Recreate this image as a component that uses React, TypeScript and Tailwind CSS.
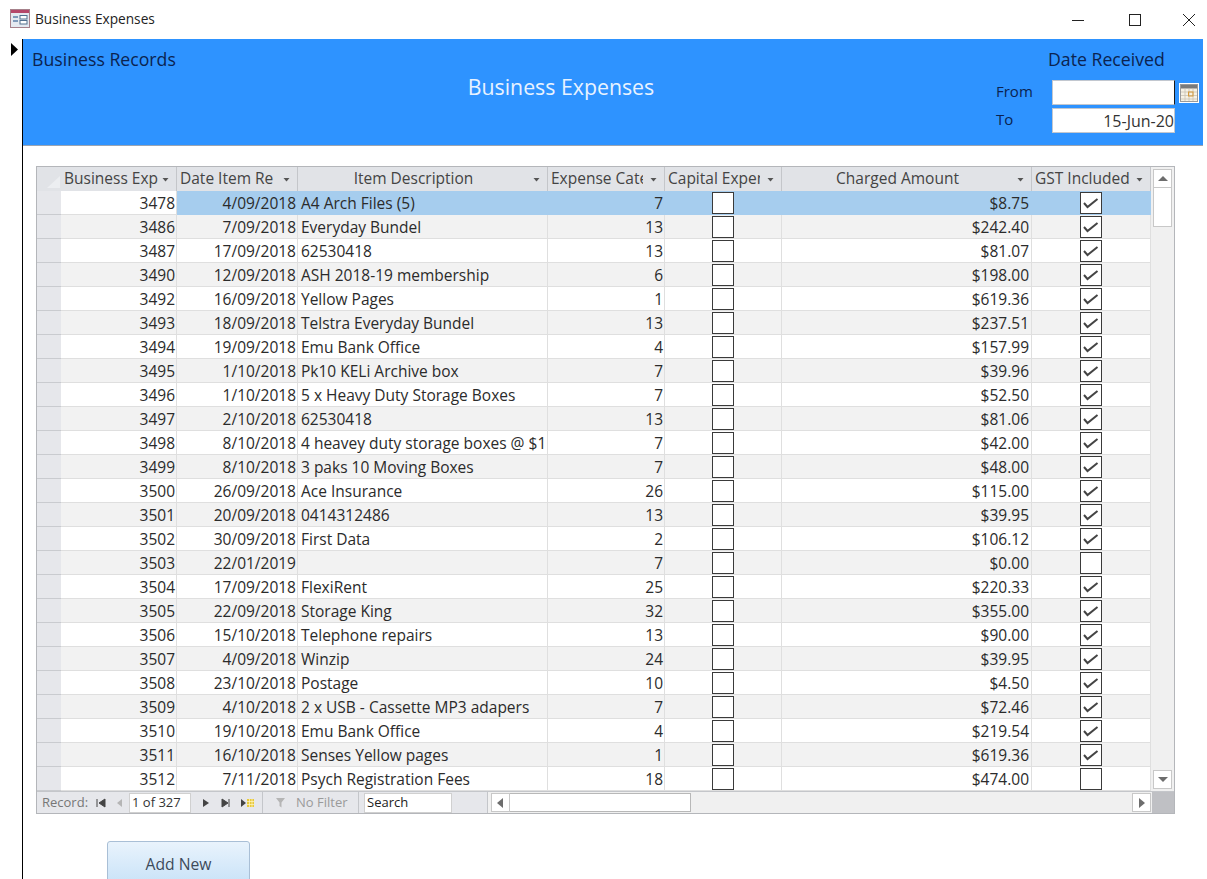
import React from 'react';

const rows: [number, string, string, number, string, boolean][] = [
  [3478, '4/09/2018', 'A4 Arch Files (5)', 7, '$8.75', true],
  [3486, '7/09/2018', 'Everyday Bundel', 13, '$242.40', true],
  [3487, '17/09/2018', '62530418', 13, '$81.07', true],
  [3490, '12/09/2018', 'ASH 2018-19 membership', 6, '$198.00', true],
  [3492, '16/09/2018', 'Yellow Pages', 1, '$619.36', true],
  [3493, '18/09/2018', 'Telstra Everyday Bundel', 13, '$237.51', true],
  [3494, '19/09/2018', 'Emu Bank Office', 4, '$157.99', true],
  [3495, '1/10/2018', 'Pk10 KELi Archive box', 7, '$39.96', true],
  [3496, '1/10/2018', '5 x Heavy Duty Storage Boxes', 7, '$52.50', true],
  [3497, '2/10/2018', '62530418', 13, '$81.06', true],
  [3498, '8/10/2018', '4 heavey duty storage boxes @ $1', 7, '$42.00', true],
  [3499, '8/10/2018', '3 paks 10 Moving Boxes', 7, '$48.00', true],
  [3500, '26/09/2018', 'Ace Insurance', 26, '$115.00', true],
  [3501, '20/09/2018', '0414312486', 13, '$39.95', true],
  [3502, '30/09/2018', 'First Data', 2, '$106.12', true],
  [3503, '22/01/2019', '', 7, '$0.00', false],
  [3504, '17/09/2018', 'FlexiRent', 25, '$220.33', true],
  [3505, '22/09/2018', 'Storage King', 32, '$355.00', true],
  [3506, '15/10/2018', 'Telephone repairs', 13, '$90.00', true],
  [3507, '4/09/2018', 'Winzip', 24, '$39.95', true],
  [3508, '23/10/2018', 'Postage', 10, '$4.50', true],
  [3509, '4/10/2018', '2 x USB - Cassette MP3 adapers', 7, '$72.46', true],
  [3510, '19/10/2018', 'Emu Bank Office', 4, '$219.54', true],
  [3511, '16/10/2018', 'Senses Yellow pages', 1, '$619.36', true],
  [3512, '7/11/2018', 'Psych Registration Fees', 18, '$474.00', false],
];

function Caret() {
  return (
    <svg width="7" height="5" viewBox="0 0 7 5" className="shrink-0">
      <path d="M0.5 1h6L3.5 4.5z" fill="#555" />
    </svg>
  );
}

function HeaderCell({ label, className, center, clip }: { label: string; className: string; center?: boolean; clip?: boolean }) {
  return (
    <div className={`flex h-full shrink-0 items-center border-r border-[#c4c6ca] pl-[3px] pr-[7px] ${className}`}>
      <span className={`flex-1 overflow-hidden whitespace-nowrap ${center ? 'pr-[3px] text-center' : ''}`}>{label}</span>
      <span className={clip ? 'ml-[7px]' : 'ml-[4px]'}><Caret /></span>
    </div>
  );
}

function CheckBox({ checked }: { checked: boolean }) {
  return (
    <div className="flex h-[22px] w-[22px] items-center justify-center border border-[#3a3a3a] bg-white">
      {checked && (
        <svg width="20" height="20" viewBox="0 0 20 20">
          <path d="M3 10l3.5 4L16.5 6" fill="none" stroke="#444" strokeWidth="2" />
        </svg>
      )}
    </div>
  );
}

function Row({ row, index }: { row: (typeof rows)[number]; index: number }) {
  const selected = index === 0;
  const bg = selected ? 'bg-[#a6cdee]' : index % 2 === 0 ? 'bg-white' : 'bg-[#f2f2f2]';
  const line = selected ? 'border-[#a6cdee]' : 'border-[#dfdfdf]';
  return (
    <div className={`flex h-[24px] text-[#2b2b2b] ${bg}`}>
      <div className="w-[24px] shrink-0 border-b border-[#c9cbcf] bg-[#e6e7eb]" />
      <div className={`w-[116px] shrink-0 border-r border-b border-[#dfdfdf] pr-[1px] text-right leading-[25px] ${selected ? 'bg-white' : ''}`}>{row[0]}</div>
      <div className={`w-[121px] shrink-0 border-r border-b pr-[1px] text-right leading-[25px] ${line}`}>{row[1]}</div>
      <div className={`w-[250px] shrink-0 overflow-hidden whitespace-nowrap border-r border-b pl-[3px] leading-[25px] ${line}`}>{row[2]}</div>
      <div className={`w-[117px] shrink-0 border-r border-b pr-[1px] text-right leading-[25px] ${line}`}>{row[3]}</div>
      <div className={`flex w-[117px] shrink-0 items-center justify-center border-r border-b ${line}`}><CheckBox checked={false} /></div>
      <div className={`w-[250px] shrink-0 border-r border-b pr-[2px] text-right leading-[25px] ${line}`}>{row[4]}</div>
      <div className={`flex w-[119px] shrink-0 items-center justify-center border-r border-b ${line}`}><CheckBox checked={row[5]} /></div>
    </div>
  );
}

function ScrollButton({ dir }: { dir: 'up' | 'down' | 'left' | 'right' }) {
  const d = { up: 'M1 7h10L6 2z', down: 'M1 2h10L6 7z', left: 'M8 1v10L2 6z', right: 'M3 1v10l6-5z' }[dir];
  return (
    <div className="flex h-[19px] w-[19px] items-center justify-center border border-[#c8c8c8] bg-white">
      <svg width="12" height="12" viewBox="0 0 12 12" className={dir === 'up' || dir === 'down' ? 'mt-[2px]' : ''}>
        <path d={d} fill="#6d6d6d" />
      </svg>
    </div>
  );
}

function NavIcon({ children, className }: { children: React.ReactNode; className: string }) {
  return (
    <svg width="14" height="12" viewBox="0 0 14 12" className={`shrink-0 ${className}`}>
      {children}
    </svg>
  );
}

export default function App() {
  return (
    <div className="h-[879px] w-[1207px] overflow-hidden bg-white font-['Open_Sans',sans-serif] text-[15.5px] text-[#333]">
      {/* title bar */}
      <div className="flex h-[39px] items-center pl-[10px]">
        <svg width="20" height="19" viewBox="0 0 20 19" className="mb-[2px]">
          <rect x="0.5" y="0.5" width="19" height="18" fill="#e4e9f0" stroke="#a6818b" />
          <rect x="1" y="1" width="18" height="3" fill="#b5476a" />
          <path d="M3 8h5M3 12h5" stroke="#5b7fa8" strokeWidth="1.5" />
          <rect x="10" y="6.5" width="7" height="3.5" fill="#fff" stroke="#51708f" />
          <rect x="10" y="11.5" width="7" height="3.5" fill="#fff" stroke="#51708f" />
        </svg>
        <span className="ml-[5px] text-[13.7px] text-[#222]">Business Expenses</span>
        <div className="ml-auto flex items-center">
          <svg width="14" height="14" viewBox="0 0 14 14" className="mr-[43px]"><path d="M1 7.5h12" stroke="#222" /></svg>
          <svg width="14" height="14" viewBox="0 0 14 14" className="mr-[40px]"><rect x="1.5" y="1.5" width="11" height="11" fill="none" stroke="#222" /></svg>
          <svg width="14" height="14" viewBox="0 0 14 14" className="mr-[11px]"><path d="M1 1l12 12M13 1 1 13" stroke="#222" /></svg>
        </div>
      </div>

      <div className="flex">
        {/* record selector */}
        <div className="w-[22px] shrink-0 pl-[10px] pt-[4px]">
          <svg width="9" height="13" viewBox="0 0 9 13"><path d="M1 0v13l7-6.5z" fill="#000" /></svg>
        </div>

        <div className="h-[840px] w-[1181px] border-l border-black">
          {/* form header */}
          <div className="flex h-[107px] border-b border-[#9aa4b2] bg-[#2e93ff] text-[#0b2350]">
            <div className="w-[400px] pl-[9px] pt-[7px] text-[17.7px] leading-[27px]">Business Records</div>
            <div className="w-[276px] pt-[33px] text-center text-[21.3px] leading-[30px] text-[#e8f2ff]">Business Expenses</div>
            <div className="flex-1 pl-[297px]">
              <div className="pl-[52px] pt-[7px] text-[17.7px] leading-[27px] whitespace-nowrap">Date Received</div>
              <div className="mt-[7px] flex h-[25px] items-center">
                <span className="-mt-[2px] w-[56px] text-[15px]">From</span>
                <div className="h-[25px] w-[123px] border border-[#c2c7cf] border-r-[#1b1b1b] bg-white" />
                <div className="ml-[4px] flex h-[20px] w-[20px] items-center justify-center bg-white">
                  <svg width="18" height="18" viewBox="0 0 18 18">
                    <rect x="0.5" y="0.5" width="17" height="17" fill="#f6f1e4" stroke="#9a9a9a" />
                    <rect x="1" y="1" width="16" height="3.5" fill="#7a7a7a" />
                    <path d="M1 8h16M1 11.5h16M1 15h16M5 4.5V17M9 4.5V17M13 4.5V17" stroke="#c9c3b4" strokeWidth="0.8" />
                    <rect x="8.5" y="8" width="4.5" height="4" fill="none" stroke="#d69a3a" />
                  </svg>
                </div>
              </div>
              <div className="mt-[3px] flex h-[25px] items-center">
                <span className="-mt-[2px] w-[56px] text-[15px]">To</span>
                <div className="h-[25px] w-[123px] border border-[#c2c7cf] bg-white text-right text-[16px] leading-[24px] text-[#333]">15-Jun-20</div>
              </div>
            </div>
          </div>

          {/* datasheet */}
          <div className="ml-[13px] mt-[20px] w-[1139px] border border-[#b4b6ba]">
            <div className="flex h-[624px]">
              <div className="w-[1114px] shrink-0 overflow-hidden">
                <div className="flex h-[24px] bg-[#e1e3e7] text-[#444]">
                  <div className="flex w-[24px] shrink-0 items-end justify-end pb-[2px]">
                    <svg width="16" height="14" viewBox="0 0 16 14"><path d="M15 1v12H2z" fill="#eceef1" /></svg>
                  </div>
                  <HeaderCell label="Business Exp" className="w-[116px]" />
                  <HeaderCell label="Date Item Re" className="w-[121px]" />
                  <HeaderCell label="Item Description" className="w-[250px]" center />
                  <HeaderCell label="Expense Cate" className="w-[117px]" clip />
                  <HeaderCell label="Capital Expen" className="w-[117px]" clip />
                  <HeaderCell label="Charged Amount" className="w-[250px]" center />
                  <HeaderCell label="GST Included" className="w-[119px]" />
                </div>
                {rows.map((row, i) => (
                  <Row key={row[0]} row={row} index={i} />
                ))}
              </div>
              <div className="flex flex-1 flex-col items-center bg-[#f0f0f0] pt-[2px]">
                <ScrollButton dir="up" />
                <div className="h-[39px] w-[19px] border border-t-0 border-[#c8c8c8] bg-white" />
                <div className="flex-1" />
                <div className="mb-[2px]"><ScrollButton dir="down" /></div>
              </div>
            </div>

            {/* navigation bar */}
            <div className="flex h-[22px] items-center border-t border-[#c4c6ca] bg-[#e6e7eb] text-[13px] text-[#777]">
              <span className="ml-[5px] w-[50px] shrink-0">Record:</span>
              <NavIcon className="ml-[3px]"><path d="M2 2v8M10 2v8L4 6z" stroke="#444" fill="#444" /></NavIcon>
              <NavIcon className="ml-[3px]"><path d="M10 2v8L5 6z" fill="#b5b5b5" /></NavIcon>
              <div className="ml-[3px] flex h-[20px] w-[62px] shrink-0 items-center border border-[#d0d0d0] bg-white pl-[2px] text-[#333]">1 of 327</div>
              <NavIcon className="ml-[8px]"><path d="M4 2v8l6-4z" fill="#444" /></NavIcon>
              <NavIcon className="ml-[6px]"><path d="M3 2v8l6-4zM10 2v8" stroke="#444" fill="#444" /></NavIcon>
              <NavIcon className="ml-[7px]">
                <path d="M1 2v8l5-4z" fill="#444" />
                <rect x="7" y="2" width="7" height="8" fill="#e8c93c" />
                <path d="M9.5 2v8M12 2v8M7 4.5h7M7 7.5h7" stroke="#fff6c8" strokeWidth="0.7" />
              </NavIcon>
              <div className="ml-[8px] flex h-full w-[97px] shrink-0 items-center border-x border-[#c4c6ca] pl-[11px] text-[#9a9a9a]">
                <svg width="14" height="12" viewBox="0 0 14 12"><path d="M2 1h9L7.5 5.5v5L5.5 9V5.5z" fill="#b5b5b5" /></svg>
                <span className="ml-[8px] whitespace-nowrap">No Filter</span>
              </div>
              <div className="ml-[5px] flex h-[20px] w-[88px] shrink-0 items-center border border-[#d0d0d0] bg-white pl-[2px] text-[#222]">Search</div>
              <div className="ml-[2px] h-full w-[34px] shrink-0 border-r border-[#c4c6ca]" />
              <div className="flex h-full flex-1 items-center bg-[#f0f0f0] pl-[3px]">
                <ScrollButton dir="left" />
                <div className="h-[19px] w-[181px] border border-l-0 border-[#b8b8b8] bg-white" />
                <div className="flex-1" />
                <ScrollButton dir="right" />
                <div className="ml-[1px] h-full w-[22px] bg-[#bfc0c4]" />
              </div>
            </div>
          </div>

          {/* add button */}
          <div className="ml-[84px] mt-[27px] flex h-[60px] w-[143px] justify-center rounded-t-[3px] border border-[#a9bfd6] bg-gradient-to-b from-[#e9f3fc] to-[#bcdcf6] pt-[11px] text-[15.7px] text-[#3d4a5a]">
            Add New
          </div>
        </div>
      </div>
    </div>
  );
}
